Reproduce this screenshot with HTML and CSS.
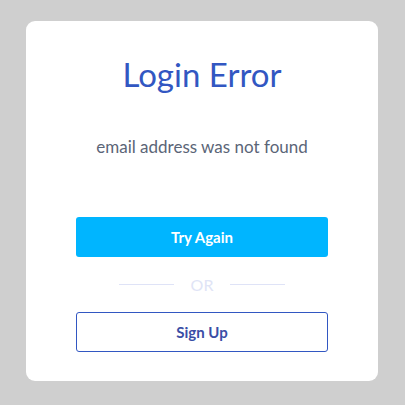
FILE: index.html
```html
<!DOCTYPE html>
<html>
<head>
<meta charset="utf-8">
<link rel="stylesheet" href="styles.css">
</head>
<body>
<div class="card">
  <h1 class="title">Login Error</h1>
  <p class="message">email address was not found</p>
  <button class="btn btn-primary">Try Again</button>
  <div class="divider"><span class="line"></span><span class="or">OR</span><span class="line"></span></div>
  <button class="btn btn-outline">Sign Up</button>
</div>
</body>
</html>
```
FILE: styles.css
```css
html, body {
  margin: 0;
  padding: 0;
}
body {
  background: #cfcfcf;
  height: 405px;
  padding: 21px 0 0 26px;
  box-sizing: border-box;
  font-family: "Source Sans Pro", "Lato", "Open Sans", sans-serif;
}
.card {
  width: 352px;
  height: 360px;
  box-sizing: border-box;
  background: #ffffff;
  border-radius: 9px;
  padding: 33px 50px 0;
  display: flex;
  flex-direction: column;
  align-items: stretch;
}
.title {
  margin: 0;
  text-align: center;
  font-weight: 400;
  font-size: 33px;
  line-height: 40px;
  color: #3257c2;
}
.message {
  margin: 43px 0 0;
  text-align: center;
  font-size: 17px;
  line-height: 20px;
  color: #5b6577;
}
.btn {
  height: 40px;
  border-radius: 3px;
  font-family: inherit;
  font-size: 15px;
  font-weight: 700;
  cursor: pointer;
}
.btn-primary {
  margin-top: 60px;
  background: #00b5ff;
  border: none;
  color: #ffffff;
}
.btn-outline {
  background: #ffffff;
  border: 1px solid #3257c2;
  color: #3a4ea6;
}
.divider {
  display: flex;
  align-items: center;
  justify-content: center;
  height: 55px;
  gap: 17px;
}
.line {
  width: 55px;
  height: 1px;
  background: #dfe3f7;
}
.or {
  font-size: 16px;
  color: #e0e4f6;
}
```
